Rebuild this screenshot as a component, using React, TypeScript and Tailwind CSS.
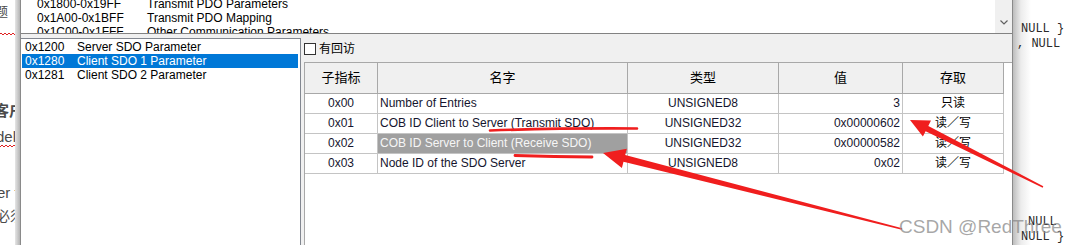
import React from "react";

type Pt = [number, number];

function arrowPoints(tip: Pt, tail: Pt, headLen: number, headHalf: number, shaftHead: number, shaftTail: number): string {
  const dx = tip[0] - tail[0];
  const dy = tip[1] - tail[1];
  const len = Math.sqrt(dx * dx + dy * dy);
  const ux = dx / len;
  const uy = dy / len;
  const nx = -uy;
  const ny = ux;
  const bx = tip[0] - ux * headLen;
  const by = tip[1] - uy * headLen;
  const p = (x: number, y: number) => `${x.toFixed(1)},${y.toFixed(1)}`;
  return [
    p(tip[0], tip[1]),
    p(bx + nx * headHalf, by + ny * headHalf),
    p(bx + nx * (shaftHead / 2), by + ny * (shaftHead / 2)),
    p(tail[0] + nx * (shaftTail / 2), tail[1] + ny * (shaftTail / 2)),
    p(tail[0] - nx * (shaftTail / 2), tail[1] - ny * (shaftTail / 2)),
    p(bx - nx * (shaftHead / 2), by - ny * (shaftHead / 2)),
    p(bx - nx * headHalf, by - ny * headHalf),
  ].join(" ");
}

const rows = [
  { idx: "0x00", name: "Number of Entries", type: "UNSIGNED8", val: "3", acc: "只读" },
  { idx: "0x01", name: "COB ID Client to Server (Transmit SDO)", type: "UNSIGNED32", val: "0x00000602", acc: "读／写" },
  { idx: "0x02", name: "COB ID Server to Client (Receive SDO)", type: "UNSIGNED32", val: "0x00000582", acc: "读／写", sel: true },
  { idx: "0x03", name: "Node ID of the SDO Server", type: "UNSIGNED8", val: "0x02", acc: "读／写" },
];

const topItems = [
  ["0x1800-0x19FF", "Transmit PDO Parameters"],
  ["0x1A00-0x1BFF", "Transmit PDO Mapping"],
  ["0x1C00-0x1FFF", "Other Communication Parameters"],
];

const leftItems = [
  ["0x1200", "Server SDO Parameter"],
  ["0x1280", "Client SDO 1 Parameter"],
  ["0x1281", "Client SDO 2 Parameter"],
];

function Squiggle({ w }: { w: number }) {
  return (
    <svg width={w} height="4" viewBox={`0 0 ${w} 4`}>
      <polyline
        points={Array.from({ length: Math.ceil(w / 2) + 1 }, (_, i) => `${i * 2},${i % 2 === 0 ? 3 : 1}`).join(" ")}
        fill="none"
        stroke="#e02020"
        strokeWidth="1"
      />
    </svg>
  );
}

export default function App() {
  const cell = "border-r border-b border-[#c4c4c4] h-[20px] leading-[19px] whitespace-nowrap overflow-hidden text-[#15152e]";
  const head = "border-r border-b border-[#a8a8a8] h-[31px] bg-[#f0f0f0] flex items-center justify-center text-[13px] text-black";
  return (
    <div className="relative w-[1068px] h-[245px] overflow-hidden bg-white flex font-['Liberation_Sans','Noto_Sans_CJK_SC',sans-serif] text-[12px] text-black">
      {/* background page strip on the left */}
      <div className="w-[15px] h-full overflow-hidden flex flex-col text-[#4a4a4a] whitespace-nowrap">
        <div className="h-[4px]" />
        <div className="h-[16px] leading-[16px] text-[13px] -ml-[5px]">题</div>
        <div className="h-[12px]" />
        <div className="h-[6px] -ml-[1px]">
          <Squiggle w={16} />
        </div>
        <div className="h-[64px]" />
        <div className="h-[17px] leading-[17px] text-[15px] font-bold -ml-[6px]">客户</div>
        <div className="h-[10px]" />
        <div className="h-[15px] leading-[15px] text-[15px] -ml-[4px]">del</div>
        <div className="h-[4px]">
          <Squiggle w={16} />
        </div>
        <div className="h-[37px]" />
        <div className="h-[15px] leading-[15px] text-[15px] -ml-[3px]">er t</div>
        <div className="h-[8px]" />
        <div className="h-[16px] leading-[16px] text-[14px] -ml-[4px]">必须</div>
      </div>
      <div className="w-[5px] h-full bg-gradient-to-r from-[#e6e6e6] to-[#b4b4b4]" />

      {/* window */}
      <div className="w-[993px] h-full flex flex-col bg-[#f0f0f0] border-l border-r border-[#8a8a8a]">
        {/* top list */}
        <div className="h-[34px] bg-white border-b border-[#828282] flex overflow-hidden">
          <div className="flex-1 flex flex-col -mt-[3px] pl-[16px]">
            {topItems.map(([a, b]) => (
              <div key={a} className="h-[14px] leading-[14px] flex whitespace-nowrap">
                <span className="w-[110px]">{a}</span>
                <span>{b}</span>
              </div>
            ))}
          </div>
          <div className="w-[17px] bg-[#f0f0f0] flex flex-col justify-end items-center pb-[8px]">
            <svg width="8" height="5" viewBox="0 0 8 5">
              <polyline points="0.5,0.5 4,4 7.5,0.5" fill="none" stroke="#606060" strokeWidth="1.2" />
            </svg>
          </div>
        </div>
        <div className="h-[4px]" />
        {/* bottom */}
        <div className="flex-1 flex">
          <div className="w-[280px] bg-white border-t border-r border-[#828790] pt-[1px] flex flex-col">
            {leftItems.map(([a, b], i) => (
              <div
                key={a}
                className={
                  "h-[14px] leading-[14px] ml-[1px] mr-[2px] pl-[3px] flex whitespace-nowrap " +
                  (i === 1 ? "bg-[#0078d7] text-white" : "text-black")
                }
              >
                <span className="w-[52px]">{a}</span>
                <span>{b}</span>
              </div>
            ))}
          </div>
          <div className="flex-1 flex flex-col pl-[3px] pt-[4px]">
            <div className="h-[14px] flex items-center gap-[3px]">
              <div className="w-[12px] h-[12px] border border-[#333333] bg-white" />
              <span className="text-[12px] leading-[14px]">有回访</span>
            </div>
            <div className="mt-[6px] flex-1 bg-white border-t border-l border-[#a8a8a8]">
              <div className="grid grid-cols-[73px_250px_151px_124px_101px]">
                <div className={head}>子指标</div>
                <div className={head}>名字</div>
                <div className={head}>类型</div>
                <div className={head}>值</div>
                <div className={head}>存取</div>
                {rows.map((r) => (
                  <React.Fragment key={r.idx}>
                    <div className={cell + " text-center"}>{r.idx}</div>
                    <div className={cell + (r.sel ? " !text-[#f6f6f6] bg-[#a0a0a0] pl-[2px]" : " pl-[2px]")}>{r.name}</div>
                    <div className={cell + " text-center"}>{r.type}</div>
                    <div className={cell + " text-right pr-[2px]"}>{r.val}</div>
                    <div className={cell + " text-center text-[12px] !text-black"}>{r.acc}</div>
                  </React.Fragment>
                ))}
              </div>
            </div>
          </div>
        </div>
      </div>

      {/* right page strip */}
      <div className="flex-1 h-full flex flex-col bg-[linear-gradient(to_right,#bdbdbd,#ececec_8px,#ffffff_18px)] font-['Liberation_Mono',monospace] text-[12px] text-[#2a2a2a] whitespace-nowrap">
        <div className="h-[22px]" />
        <div className="h-[15px] leading-[15px] pl-[8px]">{"NULL }"}</div>
        <div className="h-[15px] leading-[15px] pl-[4px]">, NULL</div>
        <div className="flex-1" />
        <div className="h-[15px] leading-[15px] pl-[15px]">NULL</div>
        <div className="h-[15px] leading-[15px] pl-[8px]">{"NULL }"}</div>
      </div>

      {/* annotations */}
      <svg className="absolute left-0 top-0 pointer-events-none" width="1068" height="245" viewBox="0 0 1068 245">
        <path d="M490 130.5 Q 560 128 637 128.5" fill="none" stroke="#f01e1e" strokeWidth="2.6" strokeLinecap="round" />
        <path d="M515 155.5 Q 555 156.5 592 157" fill="none" stroke="#f01e1e" strokeWidth="2.8" strokeLinecap="round" />
        <polygon points={arrowPoints([910, 120], [1043, 187], 19, 9, 6, 1.5)} fill="#f01e1e" />
        <polygon points={arrowPoints([603, 153], [902, 229], 22, 10, 7, 1.5)} fill="#f01e1e" />
      </svg>
      <div className="absolute left-[899px] top-[216px] text-[19px] leading-[22px] text-[#8a8a8a]/75 font-['Liberation_Sans',sans-serif] whitespace-nowrap pointer-events-none">
        CSDN @RedThree
      </div>
    </div>
  );
}
